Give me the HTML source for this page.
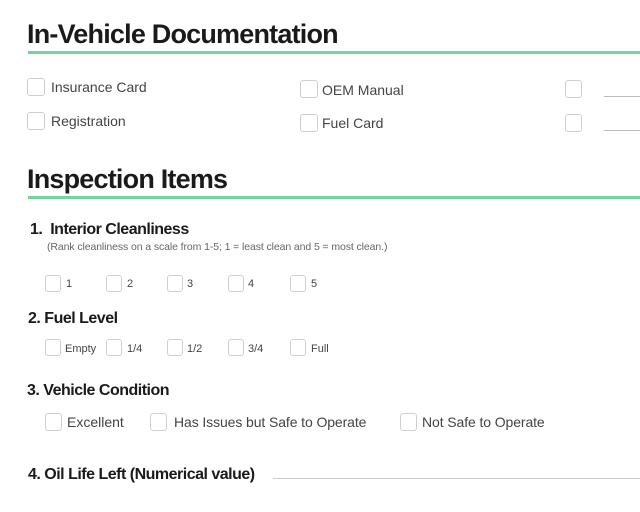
<!DOCTYPE html>
<html><head><style>
body{margin:0;width:640px;height:512px;background:#fff;position:relative;overflow:hidden;font-family:"Liberation Sans",sans-serif;}
.a{position:absolute;white-space:nowrap;}
.h1{font-size:27px;font-weight:bold;color:#1a1a1a;letter-spacing:-0.8px;}
.g{position:absolute;left:28px;right:0;height:3px;background:#74d49d;}
.cb{position:absolute;border:1.5px solid #cfcfcf;border-radius:3px;box-sizing:border-box;}
.l{font-size:14px;color:#444;}
.s{font-size:11px;color:#444;}
.h2{font-size:16px;font-weight:bold;color:#1a1a1a;letter-spacing:-0.5px;}
.ln{position:absolute;height:1px;background:#bbb;}
</style></head><body>
<div class="a h1" style="left:27px;top:19px">In-Vehicle Documentation</div>
<div class="g" style="top:51px"></div>
<div class="cb" style="left:27px;top:78px;width:18px;height:18px"></div>
<div class="a l" style="left:51px;top:79px">Insurance Card</div>
<div class="cb" style="left:300px;top:80px;width:18px;height:18px"></div>
<div class="a l" style="left:322px;top:82px">OEM Manual</div>
<div class="cb" style="left:565px;top:80px;width:17px;height:18px"></div>
<div class="ln" style="left:604px;right:0;top:96px"></div>
<div class="cb" style="left:27px;top:112px;width:18px;height:18px"></div>
<div class="a l" style="left:51px;top:113px">Registration</div>
<div class="cb" style="left:300px;top:114px;width:18px;height:18px"></div>
<div class="a l" style="left:322px;top:115px">Fuel Card</div>
<div class="cb" style="left:565px;top:114px;width:17px;height:18px"></div>
<div class="ln" style="left:604px;right:0;top:130px"></div>

<div class="a h1" style="left:27px;top:164px">Inspection Items</div>
<div class="g" style="top:196px"></div>

<div class="a h2" style="left:30px;top:221px">1.&nbsp; Interior Cleanliness</div>
<div class="a s" style="left:47px;top:241px;color:#666;font-size:10.5px;letter-spacing:-0.1px">(Rank cleanliness on a scale from 1-5; 1 = least clean and 5 = most clean.)</div>
<div class="cb" style="left:45px;top:275px;width:16px;height:17px"></div><div class="a s" style="left:66px;top:278px">1</div>
<div class="cb" style="left:106px;top:275px;width:16px;height:17px"></div><div class="a s" style="left:127px;top:278px">2</div>
<div class="cb" style="left:167px;top:275px;width:16px;height:17px"></div><div class="a s" style="left:187px;top:278px">3</div>
<div class="cb" style="left:228px;top:275px;width:16px;height:17px"></div><div class="a s" style="left:248px;top:278px">4</div>
<div class="cb" style="left:290px;top:275px;width:16px;height:17px"></div><div class="a s" style="left:311px;top:278px">5</div>

<div class="a h2" style="left:28px;top:310px">2. Fuel Level</div>
<div class="cb" style="left:45px;top:339px;width:16px;height:17px"></div><div class="a s" style="left:65px;top:343px">Empty</div>
<div class="cb" style="left:106px;top:339px;width:16px;height:17px"></div><div class="a s" style="left:127px;top:343px">1/4</div>
<div class="cb" style="left:167px;top:339px;width:16px;height:17px"></div><div class="a s" style="left:187px;top:343px">1/2</div>
<div class="cb" style="left:228px;top:339px;width:16px;height:17px"></div><div class="a s" style="left:248px;top:343px">3/4</div>
<div class="cb" style="left:290px;top:339px;width:16px;height:17px"></div><div class="a s" style="left:311px;top:343px">Full</div>

<div class="a h2" style="left:27px;top:382px">3. Vehicle Condition</div>
<div class="cb" style="left:45px;top:413px;width:17px;height:18px"></div><div class="a l" style="left:67px;top:414px">Excellent</div>
<div class="cb" style="left:150px;top:413px;width:17px;height:18px"></div><div class="a l" style="left:174px;top:414px;letter-spacing:-0.1px">Has Issues but Safe to Operate</div>
<div class="cb" style="left:400px;top:413px;width:17px;height:18px"></div><div class="a l" style="left:422px;top:414px;letter-spacing:-0.1px">Not Safe to Operate</div>

<div class="a h2" style="left:28px;top:466px">4. Oil Life Left (Numerical value)</div>
<div class="ln" style="left:273px;right:0;top:478px;background:#ccc"></div>
</body></html>
